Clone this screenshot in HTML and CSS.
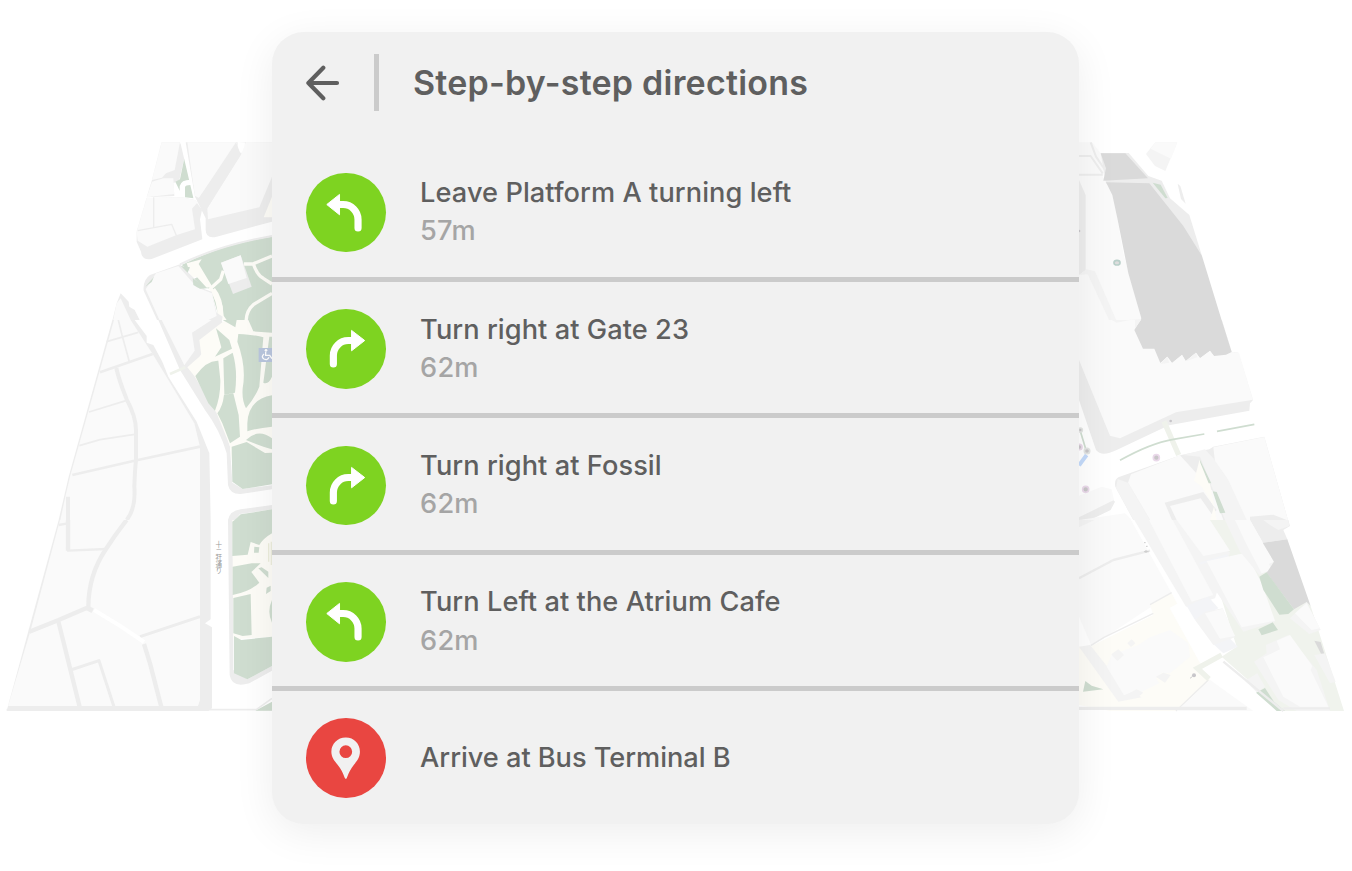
FILE: index.html
```html
<!DOCTYPE html>
<html lang="en">
<head>
<meta charset="utf-8">
<title>Step-by-step directions</title>
<link rel="stylesheet" href="styles.css">
</head>
<body>
<main class="scene">
<svg class="map" viewBox="0 0 1352 871" aria-hidden="true">
<defs>
<clipPath id="tile"><rect width="870" height="600"/></clipPath>
<clipPath id="tileShort"><rect width="870" height="570"/></clipPath>
</defs>
<!-- west, upper -->
<g transform="translate(0 130) scale(.33333)"><g clip-path="url(#tileShort)">
<path class="edge" d="M485 37H540L556 70 538 150 520 160 523 198 440 202 456 150Z"/>
<path class="block" d="M485 37H540L524 120 498 130 486 143 456 150Z"/>
<path class="block" d="M456 155L490 145H520L523 192 440 202Z"/>
<path class="green" d="M556 70L582 205 555 202 538 180 526 155 540 148Z"/>
<path class="road" d="M547 205V170Q550 156 575 157" stroke-width="16"/>
<path class="road" d="M545 30L586 205 618 246 604 270 610 330" stroke-width="11"/>
<path class="edge" d="M440 204L545 202 585 210 606 240 600 268 607 328 455 387Q425 392 423 365L410 335V305Z"/>
<path class="block" d="M440 204L545 202 585 210 594 216 576 236 585 298 528 316 442 350 413 332 410 305Z"/>
<path class="line" d="M461 202V292M413 302L515 283 543 350" stroke-width="4"/>
<path class="edge" d="M557 37H816V275L650 320Q618 328 617 300V265L585 200Z"/>
<path class="block" d="M562 37H708L712 42 597 204 585 198Z"/>
<path class="block" d="M738 37H816V140L778 232 624 268 622 235 724 73Z"/>
<path class="road" d="M724 37L722 68" stroke-width="22"/><path class="edge" d="M708 37L722 72 618 240 597 204Z"/><path class="block" d="M724 72L738 37H760L740 110Z"/>
<path class="cream" d="M816 200V262H791Z"/>
<path class="green" d="M816 320V600H668L632 478 592 465 575 450 595 440 545 405Q660 345 816 320Z"/>
<path class="line" d="M540 403Q660 345 816 318" stroke-width="6"/>
<path class="cream" d="M560 400L605 388 596 402 637 470 620 473 590 440 575 444Z"/>
<path class="trail" d="M816 378L758 402 732 402M760 402Q772 436 790 445L816 462M670 422L662 448 632 475Q664 510 664 545T685 600M816 490L760 524Q730 550 742 600" stroke-width="10"/>
<path class="trail" d="M638 480Q660 505 662 560L690 600" stroke-width="18"/>
<path class="edge" d="M663 398L722 376 755 470 699 492Z"/><path class="block" d="M663 398L722 376 740 444 685 462Z"/>
<path class="edge" d="M540 403L450 435Q428 450 431 482L485 600H660L668 560 650 548 635 485 615 478Z"/>
<path class="block" d="M535 408L468 430 437 478 492 600H580L605 580 650 558 636 490 590 472Z"/>
<path class="green" d="M436 470L462 440 455 456ZM543 408L570 412 563 428ZM578 445L622 475 600 476 580 465Z"/>
<path class="edge" d="M362 490L386 515 388 530 404 540 434 600H330L350 520Z"/>
<path class="block" d="M362 505L406 600H333L350 520Z"/>
<path class="line" d="M355 570L360 600" stroke-width="4"/>
</g></g>
<!-- west, middle -->
<g transform="translate(0 320) scale(.33333)"><g clip-path="url(#tile)">
<path class="edge" d="M337 0H404L440 48V68L460 75 487 125 505 170 590 305 628 400 632 600H176L206 470Z"/>
<path class="block" d="M342 0H392L458 102 502 175 583 310 600 380V600H181L196 530 210 470Z"/>
<path class="line" d="M355 0L366 45 388 125M320 65L415 37M267 276L378 242M238 377L300 359 404 343" stroke-width="5"/>
<path class="line" d="M300 157L458 102M217 465L400 423 600 380" stroke-width="8"/>
<path class="line" d="M349 144Q355 175 380 238 408 290 408 330V420Q405 445 403 500 408 565 380 600M204 530V600" stroke-width="12"/>
<path class="edge" d="M475 0H665L670 15 605 60 606 100 580 140 668 310 690 380 697 488 728 507 816 496V508L722 522Q690 523 684 495L680 400Q660 330 615 270L540 150Z"/>
<path class="block" d="M485 0H635L576 38 584 92 553 136Z"/>
<path class="cream" d="M665 8L680 0H816V460H700L690 378 650 280 583 168 562 142 604 105 598 60Z"/>
<path class="green" d="M648 25L688 60 696 86 645 110 664 82ZM586 168Q620 120 655 122L661 180Q662 230 645 272L625 250ZM670 115L698 98Q714 150 705 218L673 224ZM672 225L700 220 716 285 720 350 690 370 667 310 652 280Q668 260 672 225ZM668 0H710L706 22ZM715 42Q770 45 790 52L778 200Q764 235 738 265 725 240 728 205 740 140 712 65ZM745 0H816V38L760 34ZM808 50H816V170Q805 195 790 188ZM742 310Q745 238 816 226V320Q775 324 742 334ZM738 360Q775 324 816 355V388Q790 382 738 360ZM695 380L740 366 795 399 816 398V493L728 507 697 485Z"/>
<path class="pale" d="M510 162L556 142" stroke-width="8"/>
<path class="edge" d="M816 555V568L720 582 706 600H684Q690 572 722 568Z"/><path class="green" d="M816 568V600H704L722 583Z"/>
<rect class="badge" x="776" y="84" width="40" height="42"/>
<circle class="badge-mark" cx="798" cy="91" r="4"/><path class="badge-line" d="M797 95V106H809L816 116M792 102Q782 111 792 117 803 122 807 112"/>
</g></g>
<!-- west, lower -->
<g transform="translate(0 520) scale(.33333)"><g clip-path="url(#tile)">
<path class="edge" d="M176 0H632V298L615 310 636 322V565L625 573H20L86 330Z"/>
<path class="block" d="M180 0H600V540L594 558H24L92 330Z"/>
<path class="line" d="M176 15L204 10V92L318 87" stroke-width="7"/><path class="line" d="M204 0V92M380 0Q345 45 318 87 265 165 265 262L176 300 88 335M174 300L212 452 240 565M432 372L450 430 485 565" stroke-width="13"/>
<path class="line" d="M212 450L297 422 342 560M600 290L420 350" stroke-width="9"/>
<path class="line" d="M258 262L278 272" stroke-width="15"/>
<path class="road" d="M282 270Q360 315 432 366" stroke-width="12"/>
<path class="line" d="M20 569H816" stroke-width="5"/>
<path class="edge" d="M684 0H700V450L742 478 816 438V452L748 490Q695 505 689 465Z"/>
<path class="cream" d="M697 0H816V350L700 358Z"/>
<path class="green" d="M697 5L704 0H816V40Q790 55 778 75L752 66 743 104 697 108ZM763 80L778 82 776 98 762 98ZM698 140L755 130 782 130 754 156 778 188Q750 215 698 225ZM775 145L785 142 805 155V174ZM800 203L812 197V213L798 222ZM816 240V308Q800 275 816 240ZM700 234L752 222 755 345 728 348 700 340ZM702 348L724 360 816 350V438L742 478 702 460ZM766 572L816 545V572Z"/>
<path class="line" d="M770 568L816 535" stroke-width="5"/>
<path class="olive" d="M806 70V125M814 65V135" stroke-width="4"/>
</g></g>
<text class="street" x="218.7" y="541.5">十二社通り</text>
<!-- east, upper -->
<g transform="translate(1070 130) scale(.33333)"><g clip-path="url(#tileShort)">
<path class="block" d="M27 37H66L92 70 108 115 98 140 130 195 160 370 214 565 193 600H27Z"/>
<path class="line" d="M27 78H62L98 130M62 37L78 80 105 120M27 134H98" stroke-width="6"/>
<path class="edge" d="M27 150L47 195V420L27 435Z"/>
<path class="edge" d="M92 69H176L235 138 275 152 300 205 358 255 396 378H360L108 160Z"/>
<path class="grey" d="M92 70H166L234 145 100 152 108 115ZM108 157L238 160 340 288 396 378 464 600H196L214 565 175 430 142 265 127 195Z"/>
<path class="green" d="M248 158L272 164 293 204 286 205Z"/>
<path class="soft" d="M256 37H322L286 123 255 108 228 72Z"/><path class="block" d="M256 37H322L303 86 242 56Z"/>
<path class="edge" d="M323 161L331 168 347 221 333 207Z"/>
<path class="soft" d="M50 426L75 424 140 573 120 576ZM175 570L214 567 195 598ZM27 435L50 418 75 424 60 432Z"/>
<ellipse class="stop" cx="141" cy="398" rx="9" ry="7"/><circle class="dark" cx="27" cy="303" r="4"/>
</g></g>
<!-- east, middle -->
<g transform="translate(1070 320) scale(.33333)"><g clip-path="url(#tile)">
<path class="edge" d="M27 0H455L485 96 505 98 549 240 540 250 538 272 297 316 140 390Q95 412 78 390L27 240Z"/>
<path class="block" d="M27 0H455L485 96 507 98 549 239 318 277 150 355 120 347 27 120Z"/>
<path class="grey" d="M193 30L212 0H455L485 96 468 104 432 108 420 92 390 115 378 98 347 123 336 105 306 129 292 110 271 129 253 86H219Z"/>
<path class="block" d="M271 130L292 110 306 129ZM306 129L336 104 347 123ZM348 123L378 98 390 115ZM390 115L420 93 432 109Z"/>
<path class="soft" d="M195 0H213L195 24ZM125 0H180L140 8ZM271 132L292 110 298 128ZM348 124L378 98 382 112Z"/>
<path class="pale" d="M282 304L326 405" stroke-width="16"/>
<path class="green-line" d="M150 421Q240 370 310 358L403 342M441 334L553 313"/>
<path class="edge" d="M333 405L418 388 430 380 583 350 654 600H190L136 500Q132 480 145 472Z"/>
<path class="block" d="M430 382L583 351 654 600H525L490 545 470 475 435 425Z"/>
<path class="block" d="M183 463L330 406 430 515 460 600H240L174 488Z"/>
<path class="soft" d="M143 477L174 488 240 600H190L138 505ZM340 405L405 388 430 415 475 480 530 600H465L390 410Z"/>
<path class="edge" d="M284 548L400 516 440 570 425 582 392 535 300 558 320 600H306Z"/>
<path class="cream" d="M389 418L420 492 440 600H420L432 560 395 500 372 482Z"/>
<path class="green" d="M389 418L424 490 416 490 391 428ZM428 514L440 516 466 578 450 580Z"/>
<path class="edge" d="M27 585L125 535 135 545 122 570 60 600H27ZM540 590L610 584 650 600H540Z"/><path class="block" d="M27 527L95 500 125 508 132 540 27 592ZM27 600L165 580 185 600Z"/>
<path class="green-line" d="M30 330L48 390"/><path class="blue-line" d="M27 436L50 405"/>
<circle class="dark" cx="302" cy="303" r="4"/><circle class="dot" cx="259" cy="413" r="9"/><circle class="dot" cx="47" cy="508" r="9"/><circle class="dot" cx="28" cy="381" r="8"/><circle class="dot plain" cx="51" cy="393" r="8"/><circle class="dot plain" cx="31" cy="330" r="6"/>
</g></g>
<!-- east, lower -->
<g transform="translate(1070 520) scale(.33333)"><g clip-path="url(#tile)">
<path class="pale-fill" d="M380 0H500L578 68 722 258 822 573H640L455 410 500 380Z"/>
<path class="block" d="M27 20L75 0H183L305 220 65 378 27 290Z"/>
<path class="line" d="M27 175L130 120 240 92" stroke-width="7"/><path class="soft" d="M27 0H75L27 22Z"/>
<path class="cream" d="M305 220L410 420 395 450 420 480 320 573H120L27 555V380L65 378 250 285 240 254Z"/>
<path class="line" d="M240 254L305 218M62 377L102 352 250 280M310 272L410 420M415 480L318 573" stroke-width="4"/>
<path class="soft" d="M27 380L145 545 215 532 160 500 60 375Z"/>
<path class="block" d="M110 440L125 405 205 375 240 352 300 330 355 370 360 410 300 460 275 458 258 475 268 490 215 515 200 508 180 518 162 526Z"/>
<path class="soft" d="M124 403L145 388 162 405 142 423ZM172 370L185 358 196 370 183 381ZM258 470L280 458 302 465 285 488ZM180 518L200 508 220 518 200 534Z"/>
<path class="green" d="M46 483L65 497 100 508 39 515Z"/>
<path class="soft" d="M193 0H385L480 98 435 235 348 260Z"/>
<path class="block" d="M237 0H308L430 225 365 245ZM320 0H420L480 92 400 108Z"/>
<path class="road" d="M315 255L405 418 580 590" stroke-width="37"/>
<path class="pale" d="M455 405L382 445 417 477" stroke-width="16"/>
<path class="block" d="M320 573L420 480 550 573Z"/><path class="line" d="M27 565H530" stroke-width="10"/>
<path class="lav" d="M350 258L415 230 445 265 375 300ZM430 372L475 350 503 380 460 400ZM387 128L470 103 475 110 395 140Z"/>
<path class="soft" d="M375 300L405 275 458 265 495 352 430 375ZM385 135L528 98 615 305 520 335Z"/>
<path class="block" d="M405 280L458 266 495 348 450 356ZM410 124L528 98 575 190 615 302 515 322Z"/>
<path class="soft" d="M465 0H540L610 125 600 150 568 165 510 95Z"/><path class="edge" d="M540 0H655L660 18 640 30 652 58 578 68Z"/>
<path class="soft" d="M580 0H655L658 18 625 30 600 15Z"/>
<path class="block" d="M495 0H540L612 125 597 132 605 150 575 160 528 70Z"/>
<path class="grey" d="M578 68L652 58 722 258 710 246 672 268 590 158 612 125ZM733 362L752 366 763 402 753 401Z"/>
<path class="green" d="M568 170L590 157 672 268 655 282 628 284 580 210ZM565 328L608 307 624 330 575 346ZM558 518L585 504 612 545 645 573H620ZM762 570L775 562V573Z"/>
<path class="soft" d="M660 295L710 246 752 330 718 342ZM552 425L590 400 588 375 655 345 740 450 780 573H680L625 540ZM525 482L562 460 585 500 560 517ZM733 405L765 400 797 485 780 490Z"/>
<path class="block" d="M675 280L710 250 750 325 725 330ZM580 412L630 388 620 362 660 345 727 438 722 450 775 560H690L640 530Z"/>
<path class="line" d="M460 425L640 573M640 565H780" stroke-width="7"/>
<circle class="dark" cx="372" cy="466" r="6"/><path class="specks" d="M222 68h5M228 79h5M222 95h14M228 90v9M360 475l8-6"/>
</g></g>
</svg>
<section class="card">
<header class="header">
<svg class="back" viewBox="0 0 36 36"><path d="M17.3 2.7L2.4 18 17.3 33.3M2.4 18H31"/></svg>
<span class="rule"></span>
<h1 class="title">Step-by-step directions</h1>
</header>
<ol class="steps">
<li class="step"><svg class="icon" viewBox="0 0 80 80"><path class="head" d="M20.9 31.7L33.7 21.5V42Z"/><path class="shaft" d="M32 31.7H37.3A15 15 0 0 1 52.3 46.7V55.3"/></svg><div class="copy"><p class="name">Leave Platform A turning left</p><p class="distance">57m</p></div></li>
<li class="step"><svg class="icon" viewBox="0 0 80 80"><path class="head" d="M59 31.7L45.8 21.5V42Z"/><path class="shaft" d="M47.5 31.7H42.5A15 15 0 0 0 27.5 46.7V55.3"/></svg><div class="copy"><p class="name">Turn right at Gate 23</p><p class="distance">62m</p></div></li>
<li class="step"><svg class="icon" viewBox="0 0 80 80"><path class="head" d="M59 31.7L45.8 21.5V42Z"/><path class="shaft" d="M47.5 31.7H42.5A15 15 0 0 0 27.5 46.7V55.3"/></svg><div class="copy"><p class="name">Turn right at Fossil</p><p class="distance">62m</p></div></li>
<li class="step"><svg class="icon" viewBox="0 0 80 80"><path class="head" d="M20.9 31.7L33.7 21.5V42Z"/><path class="shaft" d="M32 31.7H37.3A15 15 0 0 1 52.3 46.7V55.3"/></svg><div class="copy"><p class="name">Turn Left at the Atrium Cafe</p><p class="distance">62m</p></div></li>
<li class="step"><svg class="icon arrive" viewBox="0 0 80 80"><path class="pin" fill-rule="evenodd" d="M40 19.7C31.6 19.7 25.5 26 25.5 34 25.5 41 30.5 45 34 50 36.8 54 38 58 39 60.3Q40 62 41 60.3C42 58 43.2 54 46 50 49.5 45 54.2 41 54.2 34 54.2 26 48.4 19.7 40 19.7ZM40 27.5A6.4 6.4 0 1 1 40 40.3 6.4 6.4 0 0 1 40 27.5Z"/></svg><div class="copy"><p class="name">Arrive at Bus Terminal B</p></div></li>
</ol>
</section>
</main>
</body>
</html>
```
FILE: styles.css
```css
* { box-sizing: border-box; }
body, h1, p, ol { margin: 0; padding: 0; }
body { background: #fff; font-family: Inter, "Liberation Sans", sans-serif; overflow: hidden; }
svg { display: block; flex: none; }
.scene { display: grid; width: 1352px; height: 871px; }
.map, .card { grid-area: 1 / 1; }
.map { width: 1352px; height: 871px; fill: none; }
.card { width: 807px; height: 792px; margin: 32px 0 0 272px; border-radius: 32px; background: #f1f1f1; box-shadow: 0 9px 42px rgba(0, 0, 0, .07); }
.header { display: flex; align-items: center; height: 101.4px; padding-left: 34px; }
.back { width: 36px; height: 36px; fill: none; stroke: #5f5f5f; stroke-width: 4.2; stroke-linecap: round; stroke-linejoin: round; }
.rule { width: 5px; height: 57px; margin: 0 34px 0 32px; background: #cbcbcb; }
.title { font-size: 34px; line-height: 44px; font-weight: 600; color: #5f5f5f; letter-spacing: .22px; white-space: nowrap; }
.steps { list-style: none; padding-top: 7.6px; }
.step { display: flex; align-items: center; gap: 34.5px; height: 136.4px; padding: 2.5px 0 0 34px; border-bottom: 5px solid #cbcbcb; }
.step:first-child { height: 141px; padding-top: 7px; }
.step:last-child { border: 0; padding: 0 0 3px 34px; }
.icon { width: 79.6px; height: 79.6px; border-radius: 50%; background: #7ed321; }
.arrive { background: #e94641; }
.head { fill: #fff; stroke: #fff; stroke-width: 1; stroke-linejoin: round; }
.shaft { fill: none; stroke: #fff; stroke-width: 7.2; stroke-linecap: round; }
.pin { fill: #f1f1f1; }
.copy { line-height: 38.4px; font-size: 27.2px; font-weight: 500; letter-spacing: .2px; white-space: nowrap; }
.name { color: #5f5f5f; letter-spacing: .06px; }
.step:last-child .name { letter-spacing: -.04px; }
.distance { color: #a5a5a5; }
.edge { fill: #ededed; }
.soft { fill: #f4f4f4; }
.block { fill: #fafafa; }
.green { fill: #cfddd0; }
.cream { fill: #fdfcf7; }
.grey { fill: #dadada; }
.lav { fill: #f3f4f7; }
.pale-fill { fill: #f0f3ed; }
.pale { stroke: #eff2eb; }
.line { stroke: #ededed; stroke-linejoin: round; }
.road { stroke: #fff; }
.trail { stroke: #fdfcf7; }
.olive { stroke: #eceddc; }
.green-line { stroke: #cfddd0; stroke-width: 5; }
.blue-line { stroke: #c4dafa; stroke-width: 12; }
.badge { fill: #b9c6de; }
.badge-mark { fill: #fff; }
.badge-line { stroke: #fff; stroke-width: 4; }
.stop { fill: #ddd; stroke: #b9cfc9; stroke-width: 5; }
.dark { fill: #c8c6ca; }
.dot { fill: #c8c6c8; stroke: #ead9ea; stroke-width: 5; }
.plain { stroke: #e3e5e3; }
.specks { stroke: #ccc; stroke-width: 3; }
.street { fill: #999; font: 6.5px "Noto Sans CJK JP", sans-serif; writing-mode: vertical-rl; }
```
